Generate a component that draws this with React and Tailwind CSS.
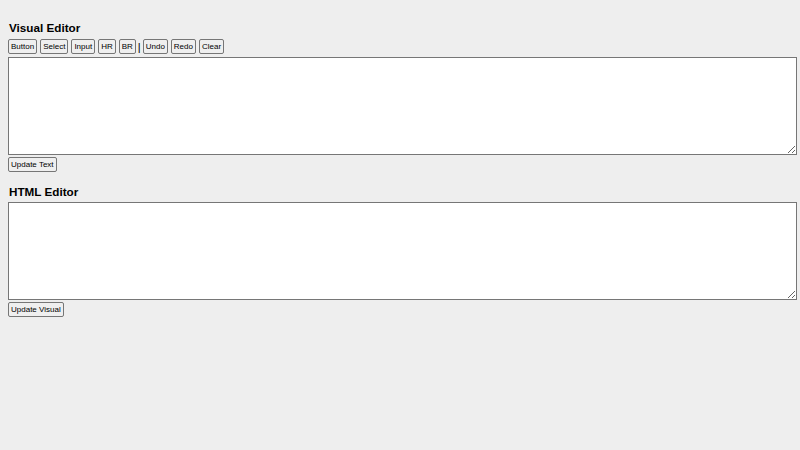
import React, { useState } from 'react';

const tools = ['Button', 'Select', 'Input', 'HR', 'BR'];
const history = ['Undo', 'Redo', 'Clear'];

const SmallButton = ({ children, onClick }) => (
  <button
    onClick={onClick}
    className="h-[15px] px-[2px] border border-[#767676] rounded-[2px] bg-[#efefef] text-[8px] leading-[11px] text-black"
  >
    {children}
  </button>
);

export default function App() {
  const [visual, setVisual] = useState('');
  const [html, setHtml] = useState('');

  return (
    <div className="min-h-[450px] w-full bg-[#eeeeee] px-[8px] pt-[21px] font-['Liberation_Sans',Arial,sans-serif] text-black">
      {/* Visual editor */}
      <h3 className="text-[11.7px] leading-[14px] font-bold pl-[1px]">Visual Editor</h3>
      <div className="mt-[4px] flex items-center gap-[3px]">
        {tools.map((t) => (
          <SmallButton key={t}>{t}</SmallButton>
        ))}
        <span className="mx-[-1px] text-[11px] leading-[12px]">|</span>
        {history.map((t) => (
          <SmallButton key={t}>{t}</SmallButton>
        ))}
      </div>
      <textarea
        value={visual}
        onChange={(e) => setVisual(e.target.value)}
        className="block mt-[3px] w-[789px] h-[98px] border border-[#767676] bg-white"
      />
      <div className="mt-[2px] flex">
        <SmallButton>Update Text</SmallButton>
      </div>

      {/* HTML editor */}
      <h3 className="mt-[13px] text-[11.7px] leading-[14px] font-bold pl-[1px]">HTML Editor</h3>
      <textarea
        value={html}
        onChange={(e) => setHtml(e.target.value)}
        className="block mt-[3px] w-[789px] h-[98px] border border-[#767676] bg-white"
      />
      <div className="mt-[2px] flex">
        <SmallButton>Update Visual</SmallButton>
      </div>
    </div>
  );
}
